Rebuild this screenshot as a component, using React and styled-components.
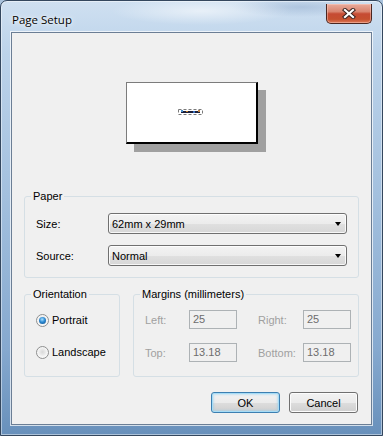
import styled, { createGlobalStyle } from "styled-components"

const GlobalStyle = createGlobalStyle`
    html, body {
        margin: 0;
        padding: 0;
    }
    body {
        background: #a9c2dc;
        font-family: "Liberation Sans", Arial, sans-serif;
    }
`

const Window = styled.div`
    width: 383px;
    height: 436px;
    box-sizing: border-box;
    border: 1px solid #34475e;
    border-radius: 7px 7px 0 0;
    padding: 0 10px 10px;
    display: flex;
    flex-direction: column;
    background:
        radial-gradient(ellipse 90px 14px at 200px 10px, rgba(255,255,255,0.55), transparent),
        radial-gradient(ellipse 70px 10px at 300px 6px, rgba(120,150,190,0.35), transparent),
        linear-gradient(180deg, #cfe0f1 0%, #bcd3ea 12%, #a3c0de 45%, #86a9cf 80%, #6890bb 100%);
    box-shadow: inset 0 0 0 1px rgba(255,255,255,0.45);
`

const TitleBar = styled.div`
    height: 31px;
    display: flex;
    justify-content: space-between;
    align-items: flex-start;
`

const Title = styled.div`
    margin-top: 11px;
    margin-left: 1px;
    font-family: "Segoe UI", "Open Sans", sans-serif;
    font-size: 11.5px;
    line-height: 16px;
    color: #000;
    text-shadow: 0 0 6px rgba(255,255,255,0.95), 0 0 2px rgba(255,255,255,0.9);
`

const CloseButton = styled.div`
    width: 46px;
    height: 20px;
    margin-top: 3px;
    box-sizing: border-box;
    border: 1px solid #4a2620;
    border-top: none;
    border-radius: 0 0 5px 5px;
    display: flex;
    align-items: center;
    justify-content: center;
    background: linear-gradient(180deg, #e9ab9c 0%, #d98570 40%, #c64b33 52%, #c5502f 80%, #dd7a58 100%);
    box-shadow: inset 0 0 0 1px rgba(255,210,200,0.45);
`

const Client = styled.div`
    flex: 1;
    background: #f0f0f0;
    border: 1px solid #6b7e95;
    box-shadow: 0 0 0 1px rgba(255,255,255,0.7);
    padding: 0 12px 11px;
    display: flex;
    flex-direction: column;
`

const Preview = styled.div`
    height: 163px;
    box-sizing: border-box;
    padding-top: 49px;
    display: flex;
    justify-content: center;
    align-items: flex-start;
`

const Page = styled.div`
    width: 129px;
    height: 59px;
    background: #fff;
    border-top: 1px solid #7c7c7c;
    border-left: 1px solid #7c7c7c;
    border-right: 2px solid #000;
    border-bottom: 2px solid #000;
    box-shadow: 8px 8px 0 #a0a0a0;
    display: flex;
    align-items: center;
    justify-content: center;
`

const Group = styled.div`
    position: relative;
    padding: ${p => p.$top}px ${p => p.$right}px ${p => p.$bottom}px 11px;
    border: 1px solid #d5dfe5;
    border-radius: 3px;
    min-width: 0;
    width: ${p => p.$width ? p.$width + "px" : "auto"};
    flex: ${p => p.$grow ? 1 : "none"};
    box-sizing: border-box;
`

const Caption = styled.span`
    position: absolute;
    top: -7px;
    left: 6px;
    padding: 0 2px;
    background: #f0f0f0;
    font-size: 11px;
    line-height: 13px;
    color: #000;
`

const FieldRow = styled.div`
    display: grid;
    grid-template-columns: 72px 1fr;
    align-items: center;
    & + & {
        margin-top: 11px;
    }
`

const Label = styled.span`
    font-size: 11px;
    color: ${p => p.$disabled ? "#a0a0a0" : "#000"};
    padding-left: ${p => p.$indent || 0}px;
`

const Select = styled.div`
    height: 21px;
    box-sizing: border-box;
    border: 1px solid #707070;
    border-radius: 3px;
    background: linear-gradient(180deg, #f3f3f3 0%, #ececec 50%, #e0e0e0 51%, #d7d7d7 100%);
    box-shadow: inset 0 0 0 1px rgba(255,255,255,0.8);
    display: flex;
    align-items: center;
    justify-content: space-between;
    padding: 0 5px 0 3px;
    font-size: 11px;
    color: #000;
`

const Arrow = styled.span`
    width: 0;
    height: 0;
    border-left: 3.5px solid transparent;
    border-right: 3.5px solid transparent;
    border-top: 4px solid #000;
    margin-top: 1px;
`

const BottomRow = styled.div`
    display: flex;
    gap: 13px;
    margin-top: 16px;
`

const RadioList = styled.div`
    display: flex;
    flex-direction: column;
    gap: 12px;
`

const RadioRow = styled.label`
    height: 20px;
    display: flex;
    align-items: center;
    gap: 3px;
    font-size: 11px;
    color: #000;
`

const RadioDot = styled.span`
    width: 13px;
    height: 13px;
    box-sizing: border-box;
    border-radius: 50%;
    border: 1px solid #8e8f8f;
    background: radial-gradient(circle at 50% 45%, #d8d8d8 0%, #f4f4f4 55%, #ffffff 100%);
    display: flex;
    align-items: center;
    justify-content: center;
    &::after {
        content: "";
        width: 7px;
        height: 7px;
        border-radius: 50%;
        display: ${p => p.$checked ? "block" : "none"};
        background: radial-gradient(circle at 45% 35%, #a9e0ff 0%, #2d8ad3 45%, #0f4f8a 100%);
    }
`

const MarginGrid = styled.div`
    display: grid;
    grid-template-columns: 44px 48px 66px 48px;
    grid-auto-rows: 19px;
    row-gap: 14px;
    align-items: center;
`

const NumBox = styled.div`
    height: 19px;
    box-sizing: border-box;
    border: 1px solid #adb2b5;
    background: #f0f0f0;
    padding-left: 3px;
    font-size: 11px;
    line-height: 17px;
    color: #6d6d6d;
`

const ButtonRow = styled.div`
    margin-top: auto;
    display: flex;
    justify-content: flex-end;
    gap: 9px;
    padding-right: 1px;
`

const Button = styled.div`
    width: 69px;
    height: 21px;
    box-sizing: border-box;
    border: 1px solid ${p => p.$default ? "#3c7fb1" : "#707070"};
    border-radius: 3px;
    background: linear-gradient(180deg, #f2f2f2 0%, #ebebeb 50%, #dddddd 51%, #cfcfcf 100%);
    box-shadow: ${p => p.$default
        ? "inset 0 0 0 1px #a6dcf6, inset 0 0 2px 2px rgba(120,200,240,0.35)"
        : "inset 0 0 0 1px #fcfcfc"};
    display: flex;
    align-items: center;
    justify-content: center;
    font-size: 11px;
    color: #000;
`

const CloseIcon = () => (
    <svg width="14" height="11" viewBox="0 0 14 11">
        <path d="M3 2 L11 9 M11 2 L3 9" stroke="#3b2320" strokeWidth="4.2" strokeLinecap="square" />
        <path d="M3 2 L11 9 M11 2 L3 9" stroke="#fff" strokeWidth="2.2" strokeLinecap="square" />
    </svg>
)

const PageThumb = () => (
    <svg width="26" height="7" viewBox="0 0 26 7">
        <rect x="0.5" y="0.5" width="24" height="5" fill="none" stroke="#7a7a7a" strokeDasharray="3 2" />
        <rect x="3" y="2" width="19" height="2" fill="#1b1f3a" />
        <rect x="3" y="1" width="2" height="2" fill="#4a90d0" />
        <rect x="8" y="2" width="2" height="1" fill="#d08a30" />
        <rect x="15" y="2" width="2" height="2" fill="#3a70c0" />
        <rect x="20" y="1" width="2" height="2" fill="#c08040" />
    </svg>
)

const App = () => {
    return (
        <>
            <GlobalStyle />
            <Window>
                <TitleBar>
                    <Title>Page Setup</Title>
                    <CloseButton><CloseIcon /></CloseButton>
                </TitleBar>
                <Client>
                    <Preview>
                        <Page><PageThumb /></Page>
                    </Preview>
                    <Group $top={16} $right={11} $bottom={11}>
                        <Caption>Paper</Caption>
                        <FieldRow>
                            <Label>Size:</Label>
                            <Select>62mm x 29mm<Arrow /></Select>
                        </FieldRow>
                        <FieldRow>
                            <Label>Source:</Label>
                            <Select>Normal<Arrow /></Select>
                        </FieldRow>
                    </Group>
                    <BottomRow>
                        <Group $width={96} $top={15} $right={8} $bottom={14}>
                            <Caption>Orientation</Caption>
                            <RadioList>
                                <RadioRow><RadioDot $checked />Portrait</RadioRow>
                                <RadioRow><RadioDot />Landscape</RadioRow>
                            </RadioList>
                        </Group>
                        <Group $grow $top={15} $right={7} $bottom={14}>
                            <Caption>Margins (millimeters)</Caption>
                            <MarginGrid>
                                <Label $disabled>Left:</Label>
                                <NumBox>25</NumBox>
                                <Label $disabled $indent={21}>Right:</Label>
                                <NumBox>25</NumBox>
                                <Label $disabled>Top:</Label>
                                <NumBox>13.18</NumBox>
                                <Label $disabled $indent={21}>Bottom:</Label>
                                <NumBox>13.18</NumBox>
                            </MarginGrid>
                        </Group>
                    </BottomRow>
                    <ButtonRow>
                        <Button $default>OK</Button>
                        <Button>Cancel</Button>
                    </ButtonRow>
                </Client>
            </Window>
        </>
    )
}

export default App
